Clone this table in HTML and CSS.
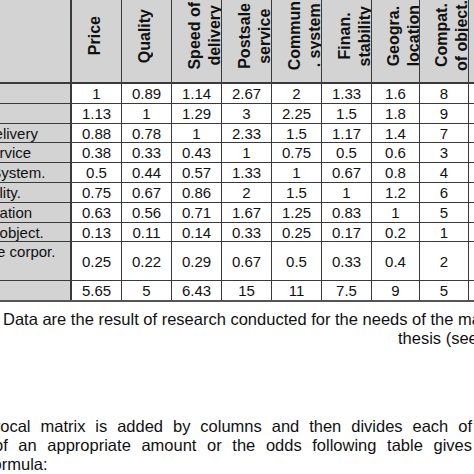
FILE: index.html
```html
<!DOCTYPE html>
<html>
<head>
<meta charset="utf-8">
<link rel="stylesheet" href="styles.css">
</head>
<body>
<div class="page">
  <table class="matrix">
    <tr class="head">
      <th class="lbl"></th>
      <th class="c"><div class="hcell"><span class="rot one">Price</span></div></th>
      <th class="c"><div class="hcell"><span class="rot one">Quality</span></div></th>
      <th class="c"><div class="hcell"><span class="rot two">Speed of<br>delivery</span></div></th>
      <th class="c"><div class="hcell"><span class="rot two">Postsale<br>service</span></div></th>
      <th class="c"><div class="hcell"><span class="rot two">Commun<br>. system</span></div></th>
      <th class="c"><div class="hcell"><span class="rot two">Finan.<br>stability</span></div></th>
      <th class="c48"><div class="hcell"><span class="rot two">Geogra.<br>location</span></div></th>
      <th class="c49"><div class="hcell"><span class="rot two">Compat.<br>of object.</span></div></th>
      <th class="extra"></th>
    </tr>
    <tr class="h20"><td class="lbl">Price</td><td>1</td><td>0.89</td><td>1.14</td><td>2.67</td><td>2</td><td>1.33</td><td>1.6</td><td>8</td><td class="extra"></td></tr>
    <tr class="h20"><td class="lbl">Quality</td><td>1.13</td><td>1</td><td>1.29</td><td>3</td><td>2.25</td><td>1.5</td><td>1.8</td><td>9</td><td class="extra"></td></tr>
    <tr class="h19"><td class="lbl">Speed of delivery</td><td>0.88</td><td>0.78</td><td>1</td><td>2.33</td><td>1.5</td><td>1.17</td><td>1.4</td><td>7</td><td class="extra"></td></tr>
    <tr class="h20"><td class="lbl">Postsale service</td><td>0.38</td><td>0.33</td><td>0.43</td><td>1</td><td>0.75</td><td>0.5</td><td>0.6</td><td>3</td><td class="extra"></td></tr>
    <tr class="h20"><td class="lbl">Commun. System.</td><td>0.5</td><td>0.44</td><td>0.57</td><td>1.33</td><td>1</td><td>0.67</td><td>0.8</td><td>4</td><td class="extra"></td></tr>
    <tr class="h20"><td class="lbl">Finan. stability.</td><td>0.75</td><td>0.67</td><td>0.86</td><td>2</td><td>1.5</td><td>1</td><td>1.2</td><td>6</td><td class="extra"></td></tr>
    <tr class="h21"><td class="lbl">Geogra. location</td><td>0.63</td><td>0.56</td><td>0.71</td><td>1.67</td><td>1.25</td><td>0.83</td><td>1</td><td>5</td><td class="extra"></td></tr>
    <tr class="h19"><td class="lbl">Compat. of object.</td><td>0.13</td><td>0.11</td><td>0.14</td><td>0.33</td><td>0.25</td><td>0.17</td><td>0.2</td><td>1</td><td class="extra"></td></tr>
    <tr class="h38"><td class="lbl top">Image of the corpor.<br>image</td><td>0.25</td><td>0.22</td><td>0.29</td><td>0.67</td><td>0.5</td><td>0.33</td><td>0.4</td><td>2</td><td class="extra"></td></tr>
    <tr class="h20 last"><td class="lbl">Sum</td><td>5.65</td><td>5</td><td>6.43</td><td>15</td><td>11</td><td>7.5</td><td>9</td><td>5</td><td class="extra"></td></tr>
  </table>
  <div class="note">Data are the result of research conducted for the needs of the master's</div>
  <div class="note2">thesis (see Sources)</div>
  <div class="para">
    <div class="ln ln1">reciprocal matrix is added by columns and then divides each of</div>
    <div class="ln ln2">of an appropriate amount or the odds following table gives</div>
    <div class="ln3">formula:</div>
  </div>
</div>
</body>
</html>
```
FILE: styles.css
```css
html, body {
  margin: 0;
  padding: 0;
  background: #ffffff;
}
body {
  width: 474px;
  height: 474px;
  overflow: hidden;
  font-family: "Liberation Sans", Arial, sans-serif;
  color: #111111;
}
.page {
  width: 474px;
}
.matrix {
  border-collapse: collapse;
  margin: -11px 0 0 -83px;
  font-size: 15px;
}
.matrix th,
.matrix td {
  border: 1px solid #3a3a3a;
  padding: 0;
  text-align: center;
  vertical-align: middle;
  line-height: 17px;
  white-space: nowrap;
  overflow: hidden;
}
.matrix .lbl {
  width: 148px;
  min-width: 148px;
  max-width: 148px;
  background: #d3d3d3;
  text-align: left;
  padding-left: 4px;
  border-right: 2px solid #3a3a3a;
}
.matrix .c { width: 49px; min-width: 49px; max-width: 49px; }
.matrix .c48 { width: 47px; min-width: 47px; max-width: 47px; }
.matrix .c49 { width: 48px; min-width: 48px; max-width: 48px; }
.matrix .extra { width: 60px; min-width: 60px; }
.head th {
  height: 90px;
  background: #d3d3d3;
  border-bottom: 2px solid #3a3a3a;
  font-weight: bold;
  font-size: 16px;
}
.hcell {
  height: 92px;
  display: flex;
  align-items: center;
  justify-content: center;
}
.rot {
  writing-mode: vertical-rl;
  transform: rotate(180deg);
  line-height: 20px;
  text-align: center;
  flex: none;
}
.rot.one { margin-left: -3px; }
.rot.two { margin-left: 16px; }
.h19 td { height: 18px; }
.h20 td { height: 19px; }
.h21 td { height: 19px; }
.h38 td { height: 36px; }
.matrix td.top {
  vertical-align: top;
  line-height: 19px;
}
.last td { border-bottom: 2px solid #555555; }
.note {
  margin-top: 8px;
  padding-left: 3px;
  font-size: 16.5px;
  line-height: 19px;
  white-space: nowrap;
}
.note2 {
  padding-left: 398px;
  font-size: 16.5px;
  line-height: 19px;
  white-space: nowrap;
}
.para {
  margin-top: 69px;
  font-size: 16.5px;
  line-height: 19px;
}
.ln {
  text-align: justify;
  text-align-last: justify;
}
.ln1 {
  margin-left: -41px;
  width: 513px;
}
.ln2 {
  margin-left: -6px;
  width: 478px;
}
.ln3 {
  margin-left: -12px;
  white-space: nowrap;
}
```
